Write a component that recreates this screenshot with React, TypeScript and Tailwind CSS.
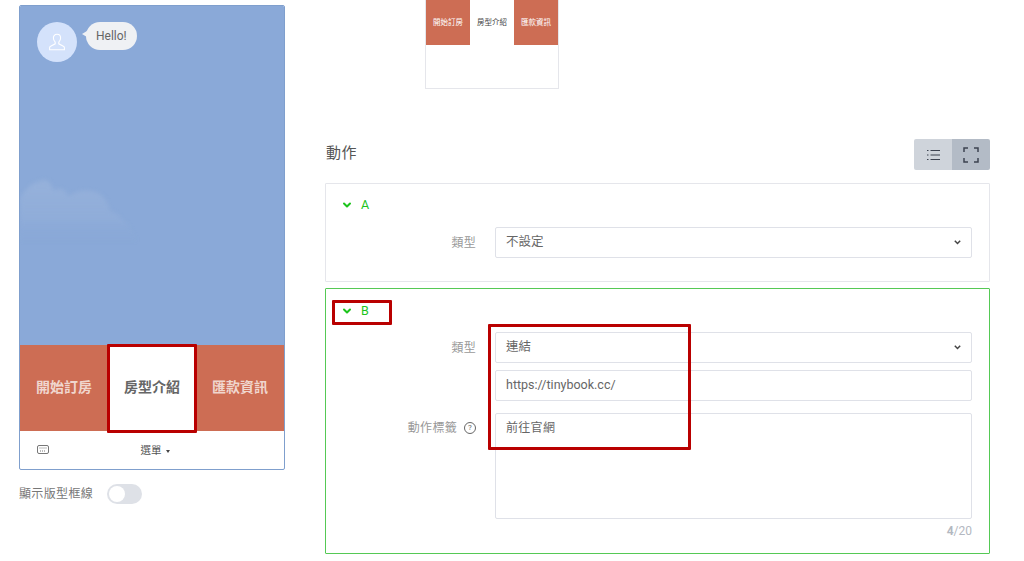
import { ChevronDown } from "lucide-react";

const FONT = "font-['Roboto','Noto_Sans_CJK_TC',sans-serif]";

function RedBox({ className }: { className: string }) {
  return <div className={`absolute border-[3px] border-[#b90000] rounded-[1px] pointer-events-none ${className}`} />;
}

function Caret() {
  return (
    <svg width="7" height="5" viewBox="0 0 7 5" className="shrink-0 text-[#444]">
      <path d="M.8.8 3.500 3.500 6.200.8" fill="none" stroke="currentColor" strokeWidth="1.500" />
    </svg>
  );
}

function Field({ value, select }: { value: string; select?: boolean }) {
  return (
    <div className="h-[31px] border border-[#dfe1e8] rounded-[2px] bg-white flex items-center justify-between pl-[10px] pr-[10px] pb-[1px] text-[12.5px] text-[#666]">
      <span>{value}</span>
      {select && <Caret />}
    </div>
  );
}

function SectionTitle({ name }: { name: string }) {
  return (
    <div className="flex items-center text-[12.5px] leading-[16px] text-[#1cc41c]">
      <ChevronDown size={12} strokeWidth={4} className="ml-[15px] mr-[8px]" />
      <span>{name}</span>
    </div>
  );
}

function Phone() {
  return (
    <div className="w-[266px] h-[465px] mt-[5px] border border-[#7f9fcd] rounded-[2px] flex flex-col overflow-hidden bg-white">
      <div className="relative h-[339px] bg-[#8aa9d8] pt-[16px] pl-[17px] flex items-start overflow-hidden">
        <svg width="120" height="70" viewBox="0 0 120 70" className="absolute left-0 bottom-[102px] blur-[2px]">
          <defs>
            <linearGradient id="cloud" x1="0" y1="0" x2="0" y2="1">
              <stop offset="0" stopColor="#a9bfdf" stopOpacity="0.4" />
              <stop offset="0.6" stopColor="#a3bade" stopOpacity="0.25" />
              <stop offset="1" stopColor="#8aa9d8" stopOpacity="0" />
            </linearGradient>
          </defs>
          <path d="M0 26 C4 16 12 10 20 8 C28 4 32 12 34 18 C40 14 46 16 48 24 C52 20 62 16 72 18 C82 20 88 28 90 38 C102 42 112 54 118 70 L0 70 Z" fill="url(#cloud)" />
        </svg>
        <div className="relative w-[40px] h-[40px] rounded-full bg-[#d4e2fb] flex items-center justify-center shrink-0">
          <svg width="16" height="18" viewBox="0 0 16 18" fill="none" stroke="white" strokeWidth="1.1">
            <path d="M8 1.200c2.300 0 3.600 1.600 3.600 3.800 0 1.600-.8 3.200-1.800 4.200v1.600l4.600 2.500c.8.4 1 .9 1 1.400v2.100H.6v-2.100c0-.5.2-1 1-1.400l4.600-2.500V9.200C5.200 8.200 4.400 6.600 4.400 5 4.400 2.800 5.700 1.200 8 1.200z" />
          </svg>
        </div>
        <div className="relative ml-[9px] h-[28px] px-[10px] rounded-[14px] bg-[#eff1f4] text-[12px] text-[#666] flex items-center">
          <span className="absolute left-[-4px] top-[9px] w-0 h-0 border-t-[3px] border-t-transparent border-l-0 border-r-[5px] border-r-[#eff1f4] border-b-[3px] border-b-transparent" />
          Hello!
        </div>
      </div>
      <div className="h-[86px] grid grid-cols-3 bg-[#cd6d54] text-[14px] font-bold text-[#f0d6ce] text-center">
        <div className="flex items-center justify-center pb-[1px]">開始訂房</div>
        <div className="flex items-center justify-center pb-[1px] bg-white text-[#666]">房型介紹</div>
        <div className="flex items-center justify-center pb-[1px]">匯款資訊</div>
      </div>
      <div className="flex-1 relative flex items-center justify-center pl-[6px] pt-[2px] text-[10.5px] text-[#555]">
        <svg width="12" height="9" viewBox="0 0 12 9" className="absolute left-[17px] top-[14px]" fill="none" stroke="#777">
          <rect x="0.5" y="0.5" width="11" height="8" rx="1.5" />
          <path d="M3 6h6M2.500 3h7" strokeDasharray="1 1" />
        </svg>
        <span>選單</span>
        <span className="ml-[4px] w-0 h-0 border-x-[2.5px] border-x-transparent border-t-[3px] border-t-[#444]" />
      </div>
    </div>
  );
}

export default function App() {
  return (
    <div className={`relative w-[1024px] h-[561px] overflow-hidden bg-white flex items-start pl-[19px] ${FONT}`}>
      <div className="w-[266px] shrink-0">
        <Phone />
        <div className="flex items-center mt-[14px] text-[12px] text-[#777]">
          <span className="tracking-[0.35px]">顯示版型框線</span>
          <div className="ml-[13.500px] w-[35px] h-[20px] rounded-full bg-[#dee1e7] p-[2px]">
            <div className="w-[16px] h-[16px] rounded-full bg-white" />
          </div>
        </div>
      </div>

      <div className="w-[665px] ml-[40px] shrink-0">
        <div className="ml-[100px] w-[134px] h-[89px] border border-t-0 border-[#e5e6eb] bg-white">
          <div className="h-[45px] grid grid-cols-3 bg-[#cd6d54] text-[7.500px] text-white text-center">
            <div className="flex items-center justify-center">開始訂房</div>
            <div className="flex items-center justify-center bg-white text-[#444]">房型介紹</div>
            <div className="flex items-center justify-center">匯款資訊</div>
          </div>
        </div>

        <div className="h-[31px] mt-[50px] flex items-center justify-between">
          <h2 className="text-[15px] text-[#555] tracking-[0.5px] ml-[1px] mb-[3px]">動作</h2>
          <div className="w-[76px] h-[31px] rounded-[2px] overflow-hidden flex">
            <div className="w-[38px] bg-[#cfd4db] flex items-center justify-center">
              <svg width="13" height="12" viewBox="0 0 13 12" stroke="#3c4350" strokeWidth="1.2">
                <path d="M3.500 1.500H13M3.500 6H13M3.500 10.500H13M0 1.500h1.500M0 6h1.500M0 10.500h1.500" />
              </svg>
            </div>
            <div className="w-[38px] bg-[#b3bbc6] flex items-center justify-center">
              <svg width="16" height="16" viewBox="0 0 16 16" fill="none" stroke="#3c4350" strokeWidth="1.500">
                <path d="M1 5V1h4M11 1h4v4M15 11v4h-4M5 15H1v-4" />
              </svg>
            </div>
          </div>
        </div>

        <div className="h-[99px] mt-[13px] border border-[#e5e6eb] rounded-[1px] pt-[13px]">
          <SectionTitle name="A" />
          <div className="flex mt-[14px] pr-[17px]">
            <div className="w-[150px] text-right text-[12px] tracking-[0.3px] leading-[32px] text-[#999]">類型</div>
            <div className="flex-1 ml-[19px]"><Field value="不設定" select /></div>
          </div>
        </div>

        <div className="h-[266px] mt-[6px] border border-[#55c955] rounded-[1px] pt-[14px]">
          <SectionTitle name="B" />
          <div className="mt-[13px] pr-[17px] grid grid-cols-[150px_1fr] gap-x-[19px]">
            <div className="text-right text-[12px] tracking-[0.3px] leading-[32px] text-[#999]">類型</div>
            <Field value="連結" select />
            <div />
            <div className="mt-[6px]"><Field value="https://tinybook.cc/" /></div>
            <div className="mt-[12px] h-[30px] flex items-center justify-end text-[12px] text-[#999]">
              <span className="tracking-[0.3px]">動作標籤</span>
              <span className="ml-[7px] w-[12px] h-[12px] rounded-full border border-[#666] text-[8px] leading-none text-[#666] flex items-center justify-center">?</span>
            </div>
            <div className="mt-[12px]">
              <div className="h-[106px] border border-[#dfe1e8] rounded-[2px] pt-[5px] pl-[10px] text-[12px] tracking-[0.3px] text-[#666]">前往官網</div>
              <div className="mt-[3px] text-right text-[12px] text-[#b3b8c1]"><b>4</b>/20</div>
            </div>
          </div>
        </div>
      </div>

      <RedBox className="left-[107px] top-[344px] w-[90px] h-[89px]" />
      <RedBox className="left-[332px] top-[300px] w-[60px] h-[25px]" />
      <RedBox className="left-[488px] top-[324px] w-[203px] h-[126px]" />
    </div>
  );
}
